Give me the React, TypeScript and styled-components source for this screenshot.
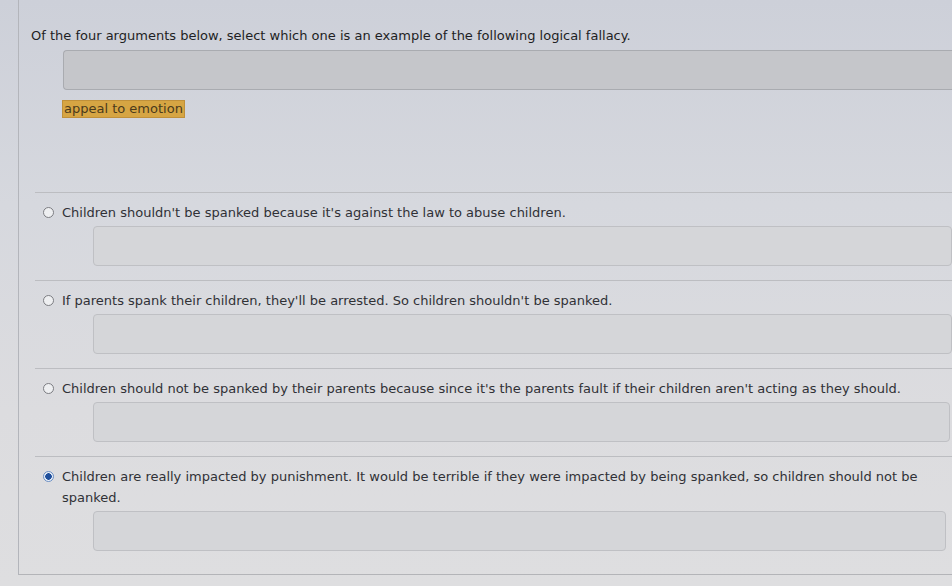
import React from "react";
import styled, { createGlobalStyle } from "styled-components";

const Global = createGlobalStyle`
  html, body { margin: 0; padding: 0; }
  body {
    width: 952px;
    height: 586px;
    overflow: hidden;
    background: linear-gradient(180deg, #cdd0d9 0%, #d6d8de 35%, #dcdcdf 70%, #dedee0 100%);
    font-family: "DejaVu Sans", Verdana, sans-serif;
  }
`;

const Page = styled.div`
  padding-left: 18px;
  height: 586px;
  box-sizing: border-box;
`;

const Panel = styled.div`
  border-left: 1px solid #b3b5bb;
  border-bottom: 1px solid #b3b4b8;
  padding: 26px 0 9px 12px;
`;

const Title = styled.div`
  font-size: 13px;
  line-height: 20px;
  color: #1e1f24;
  white-space: nowrap;
`;

const PromptBox = styled.div`
  margin: 4px 0 0 32px;
  height: 38px;
  background: #c5c6ca;
  border: 1px solid #a9abb0;
  border-right: none;
  border-radius: 4px 0 0 4px;
`;

const Highlight = styled.span`
  display: inline-block;
  margin: 10px 0 0 31px;
  padding: 0 1px;
  font-size: 13px;
  line-height: 16px;
  color: #4a3a1c;
  background: #d6a543;
  border: 1px solid #c09039;
`;

const Options = styled.div`
  margin-top: 74px;
  display: flex;
  flex-direction: column;
`;

const Row = styled.div`
  margin-left: 4px;
  border-top: 1px solid #bcbdc1;
  padding: 9px 0 14px 8px;
`;

const Label = styled.label`
  display: flex;
  align-items: flex-start;
  gap: 8px;
  font-size: 13px;
  line-height: 21px;
  color: #303136;
  padding-right: 24px;
`;

const Radio = styled.span<{ $checked?: boolean }>`
  flex: none;
  width: 9px;
  height: 9px;
  margin-top: 5px;
  border-radius: 50%;
  border: 1.5px solid ${(p) => (p.$checked ? "#6b8fc4" : "#7c7d82")};
  background: ${(p) => (p.$checked ? "radial-gradient(circle, #1f4f9c 0 3px, #e8eef7 3.5px)" : "#eeeff1")};
`;

const AnswerBox = styled.div<{ $inset?: number }>`
  margin: 3px ${(p) => p.$inset ?? 0}px 0 50px;
  height: 38px;
  background: #d5d6d9;
  border: 1px solid #bfc0c4;
  border-radius: 4px;
`;

const options = [
  { text: "Children shouldn't be spanked because it's against the law to abuse children.", checked: false, inset: 0 },
  { text: "If parents spank their children, they'll be arrested. So children shouldn't be spanked.", checked: false, inset: 0 },
  {
    text: "Children should not be spanked by their parents because since it's the parents fault if their children aren't acting as they should.",
    checked: false,
    inset: 2,
  },
  {
    text: "Children are really impacted by punishment. It would be terrible if they were impacted by being spanked, so children should not be spanked.",
    checked: true,
    inset: 6,
  },
];

export default function App() {
  return (
    <Page>
      <Global />
      <Panel>
        <Title>Of the four arguments below, select which one is an example of the following logical fallacy.</Title>
        <PromptBox />
        <Highlight>appeal to emotion</Highlight>
        <Options>
          {options.map((o, i) => (
            <Row key={i}>
              <Label>
                <Radio $checked={o.checked} />
                <span>{o.text}</span>
              </Label>
              <AnswerBox $inset={o.inset} />
            </Row>
          ))}
        </Options>
      </Panel>
    </Page>
  );
}
